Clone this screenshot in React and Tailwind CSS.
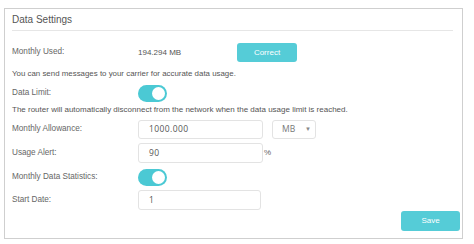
import React from "react";

function Toggle() {
    return (
        <div className="w-[29px] h-[17px] rounded-full bg-[#4bc9d4] flex items-center justify-end pr-[2px]">
            <div className="w-[13px] h-[13px] rounded-full bg-white" />
        </div>
    );
}

function Row({ label, children, className = "" }) {
    return (
        <div className={"flex items-center " + className}>
            <div className="w-[126px] shrink-0 text-[8.2px] text-[#666]">{label}</div>
            {children}
        </div>
    );
}

function Field({ value, width }) {
    return (
        <div
            className={
                "h-full border border-[#e3e3e3] rounded-[3px] flex items-center pl-[10px] font-['Open_Sans',sans-serif] text-[8.5px] tracking-[0.4px] text-[#555] " +
                width
            }
        >
            {value}
        </div>
    );
}

export default function App() {
    return (
        <div className="w-[474px] h-[244px] bg-white pt-[8px] pl-[4px] font-['Liberation_Sans',Arial,sans-serif]">
            <section className="w-[459px] h-[231px] border border-[#cfcfcf] flex flex-col">
                {/* header */}
                <div className="h-[21px] flex items-center pl-[7px] text-[10px] text-[#555]">
                    Data Settings
                </div>
                <div className="h-px bg-[#e6e6e6] ml-[7px] mr-[9px]" />

                <div className="flex flex-col pl-[7px]">
                    <Row label="Monthly Used:" className="h-[19px] mt-[12px]">
                        <div className="w-[99px] text-[8px] text-[#555]">194.294 MB</div>
                        <button className="w-[60px] h-full rounded-[3px] bg-[#55ccd7] text-white text-[8px]">
                            Correct
                        </button>
                    </Row>
                    <p className="h-[16px] mt-[4px] leading-[16px] text-[7.9px] text-[#555]">
                        You can send messages to your carrier for accurate data usage.
                    </p>
                    <Row label="Data Limit:" className="h-[17px] mt-[3px]">
                        <Toggle />
                    </Row>
                    <p className="h-[16px] leading-[16px] text-[8px] text-[#555]">
                        The router will automatically disconnect from the network when the data usage limit is reached.
                    </p>
                    <Row label="Monthly Allowance:" className="h-[19px] mt-[2px]">
                        <Field value="1000.000" width="w-[125px]" />
                        <div className="ml-[9px] w-[44px] h-full border border-[#e3e3e3] rounded-[3px] flex items-center justify-between pl-[9px] pr-[4px] font-['Open_Sans',sans-serif] text-[8.5px] text-[#777]">
                            MB
                            <span className="text-[6px] text-[#888]">▼</span>
                        </div>
                    </Row>
                    <Row label="Usage Alert:" className="h-[20px] mt-[4px]">
                        <Field value="90" width="w-[125px]" />
                        <span className="ml-[1px] text-[8px] text-[#666]">%</span>
                    </Row>
                    <Row label="Monthly Data Statistics:" className="h-[17px] mt-[6px]">
                        <Toggle />
                    </Row>
                    <Row label="Start Date:" className="h-[20px] mt-[4px]">
                        <Field value="1" width="w-[123px]" />
                    </Row>
                    <div className="h-[20px] mt-[1px] flex justify-end pr-[2px]">
                        <button className="w-[59px] h-full rounded-[3px] bg-[#55ccd7] text-white text-[8px]">
                            Save
                        </button>
                    </div>
                </div>
            </section>
        </div>
    );
}
